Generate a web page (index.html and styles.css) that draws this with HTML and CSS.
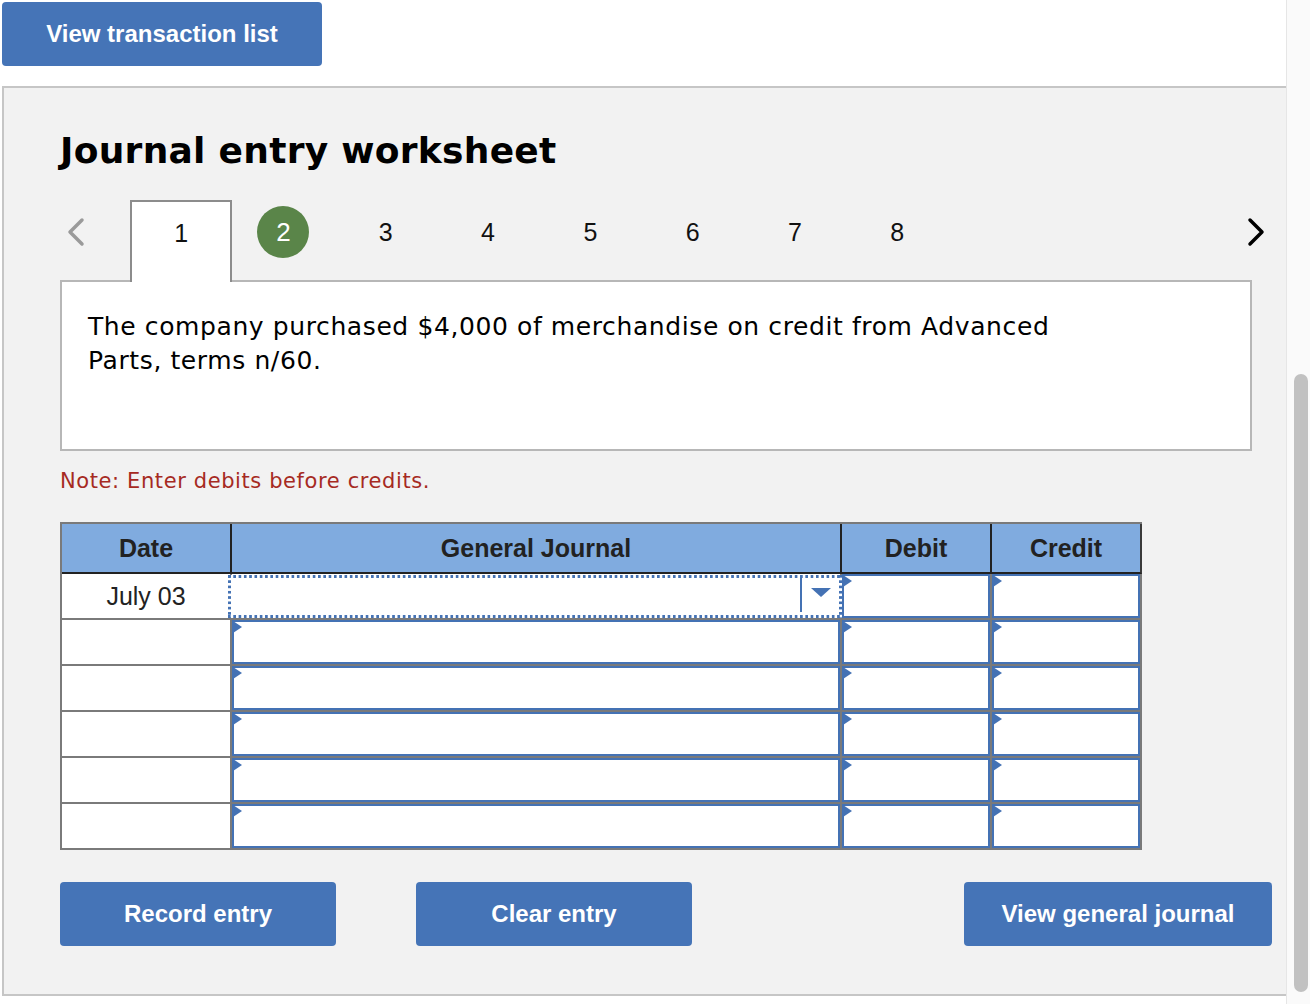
FILE: index.html
```html
<!DOCTYPE html>
<html lang="en">
<head>
<meta charset="utf-8">
<title>Journal entry worksheet</title>
<link rel="stylesheet" href="styles.css">
</head>
<body>
<div class="page">
  <div class="main">
    <div class="topbar">
      <button class="btn btn-top">View transaction list</button>
    </div>
    <section class="panel">
      <h1 class="title">Journal entry worksheet</h1>
      <div class="tabs">
        <div class="nav nav-prev">
          <svg width="20" height="30" viewBox="0 0 20 30"><polyline points="16,3 4,15 16,27" fill="none" stroke="#9a9a9a" stroke-width="3.5" stroke-linecap="round" stroke-linejoin="round"/></svg>
        </div>
        <div class="tab tab-active"><span class="tab-num">1</span></div>
        <div class="tab"><span class="tab-num tab-done">2</span></div>
        <div class="tab"><span class="tab-num">3</span></div>
        <div class="tab"><span class="tab-num">4</span></div>
        <div class="tab"><span class="tab-num">5</span></div>
        <div class="tab"><span class="tab-num">6</span></div>
        <div class="tab"><span class="tab-num">7</span></div>
        <div class="tab"><span class="tab-num">8</span></div>
        <div class="nav nav-next">
          <svg width="20" height="30" viewBox="0 0 20 30"><polyline points="4,3 16,15 4,27" fill="none" stroke="#000" stroke-width="3.5" stroke-linecap="round" stroke-linejoin="round"/></svg>
        </div>
      </div>
      <div class="desc">
        <p class="desc-text">The company purchased $4,000 of merchandise on credit from Advanced Parts, terms n/60.</p>
      </div>
      <p class="note">Note: Enter debits before credits.</p>
      <table class="journal">
        <thead>
          <tr>
            <th class="c-date">Date</th>
            <th class="c-gj">General Journal</th>
            <th class="c-amt">Debit</th>
            <th class="c-amt">Credit</th>
          </tr>
        </thead>
        <tbody>
          <tr>
            <td class="date-cell">July 03</td>
            <td><div class="select"><div class="select-arrow"><span class="caret"></span></div></div></td>
            <td><div class="field"></div></td>
            <td><div class="field"></div></td>
          </tr>
          <tr>
            <td class="date-cell"></td>
            <td><div class="field"></div></td>
            <td><div class="field"></div></td>
            <td><div class="field"></div></td>
          </tr>
          <tr>
            <td class="date-cell"></td>
            <td><div class="field"></div></td>
            <td><div class="field"></div></td>
            <td><div class="field"></div></td>
          </tr>
          <tr>
            <td class="date-cell"></td>
            <td><div class="field"></div></td>
            <td><div class="field"></div></td>
            <td><div class="field"></div></td>
          </tr>
          <tr>
            <td class="date-cell"></td>
            <td><div class="field"></div></td>
            <td><div class="field"></div></td>
            <td><div class="field"></div></td>
          </tr>
          <tr>
            <td class="date-cell"></td>
            <td><div class="field"></div></td>
            <td><div class="field"></div></td>
            <td><div class="field"></div></td>
          </tr>
        </tbody>
      </table>
      <div class="actions">
        <button class="btn btn-action">Record entry</button>
        <button class="btn btn-action btn-clear">Clear entry</button>
        <button class="btn btn-action btn-view">View general journal</button>
      </div>
    </section>
  </div>
  <div class="scrollbar"><div class="thumb"></div></div>
</div>
</body>
</html>
```
FILE: styles.css
```css
html, body {
  margin: 0;
  padding: 0;
  background: #fff;
}

body {
  font-family: "DejaVu Sans", Verdana, sans-serif;
  color: #000;
}

.page {
  display: flex;
  width: 1310px;
  height: 1004px;
  overflow: hidden;
}

.main {
  width: 1286px;
  flex: none;
}

.topbar {
  height: 86px;
  box-sizing: border-box;
  padding: 2px 0 0 2px;
}

.btn {
  background: #4574b7;
  color: #fff;
  border: 0;
  border-radius: 4px;
  font-family: "Liberation Sans", Arial, sans-serif;
  font-weight: bold;
  font-size: 24px;
  height: 64px;
  padding: 0;
  cursor: pointer;
}

.btn-top {
  width: 320px;
}

.panel {
  margin-left: 2px;
  border: 2px solid #c6c6c6;
  border-right: 0;
  background: #f2f2f2;
  padding: 41px 0 48px 56px;
}

.title {
  margin: 0;
  font-size: 36px;
  line-height: 44px;
  font-weight: bold;
  letter-spacing: 0.28px;
  color: #000;
}

.tabs {
  margin-top: 27px;
  width: 1212px;
  height: 82px;
  display: flex;
  align-items: flex-start;
  position: relative;
  z-index: 1;
}

.nav {
  height: 64px;
  display: flex;
  align-items: center;
}

.nav-prev {
  width: 70px;
  padding-left: 6px;
  box-sizing: border-box;
}

.nav-next {
  margin-left: auto;
  padding-right: 6px;
}

.tab {
  width: 102.3px;
  height: 64px;
  box-sizing: border-box;
  display: flex;
  align-items: center;
  justify-content: center;
  font-family: "Liberation Sans", Arial, sans-serif;
  font-size: 25px;
  color: #111;
}

.tab-active {
  height: 82px;
  padding-bottom: 18px;
  background: #fff;
  border: 2px solid #8c8c8c;
  border-bottom: 0;
}

.tab-done {
  width: 52px;
  height: 52px;
  border-radius: 50%;
  background: #5a8549;
  color: #fff;
  font-size: 26px;
  display: flex;
  align-items: center;
  justify-content: center;
}

.desc {
  margin-top: -2px;
  width: 1192px;
  height: 171px;
  box-sizing: border-box;
  background: #fff;
  border: 2px solid #b7b7b7;
  padding: 28px 26px 0 26px;
}

.desc-text {
  margin: 0;
  width: 1000px;
  font-size: 25px;
  line-height: 34px;
  letter-spacing: 0.6px;
  color: #000;
}

.note {
  margin: 18px 0 0 0;
  font-size: 21px;
  line-height: 25px;
  letter-spacing: 0.6px;
  color: #a62a22;
}

.journal {
  margin-top: 28px;
  border-collapse: separate;
  border-spacing: 0;
  border-top: 2px solid #7a7a7a;
  border-left: 2px solid #7a7a7a;
  font-family: "Liberation Sans", Arial, sans-serif;
}

.journal th,
.journal td {
  padding: 0;
  border-right: 2px solid #7a7a7a;
  border-bottom: 2px solid #7a7a7a;
}

.journal th {
  height: 48px;
  background: #80abdf;
  color: #222;
  font-size: 25px;
  font-weight: bold;
  text-align: center;
  border-right-color: #222;
  border-bottom-color: #222;
}

.journal th:last-child {
  border-right-color: #3a3a3a;
}

.c-date { width: 168px; }
.c-gj { width: 608px; }
.c-amt { width: 148px; }

.journal td {
  height: 44px;
  background: #fff;
  vertical-align: top;
}

.journal td.date-cell {
  font-size: 25px;
  color: #222;
  text-align: center;
  vertical-align: middle;
}

.field {
  position: relative;
  height: 44px;
  box-sizing: border-box;
  border: 2px solid #4472b4;
  background: #fff;
}

.field::before {
  content: "";
  position: absolute;
  left: -1px;
  top: -1px;
  width: 0;
  height: 0;
  border-left: 9px solid #4472b4;
  border-top: 6px solid transparent;
  border-bottom: 6px solid transparent;
}

.select {
  position: relative;
  z-index: 2;
  margin: 1px -2px 0 -4px;
  height: 43px;
  box-sizing: border-box;
  padding: 3px;
  display: flex;
  justify-content: flex-end;
  background:
    linear-gradient(to right, #4472b4 0 3px, transparent 3px 5.3px) left top / 5.3px 3px repeat-x,
    linear-gradient(to right, #4472b4 0 3px, transparent 3px 5.3px) left bottom / 5.3px 3px repeat-x,
    linear-gradient(to bottom, #4472b4 0 3px, transparent 3px 5.3px) left top / 3px 5.3px repeat-y,
    linear-gradient(to bottom, #4472b4 0 3px, transparent 3px 5.3px) right top / 3px 5.3px repeat-y,
    #fff;
}

.select-arrow {
  width: 39px;
  height: 34px;
  box-sizing: border-box;
  border-left: 2px solid #4472b4;
  display: flex;
  justify-content: center;
  align-items: flex-start;
}

.caret {
  margin-top: 10px;
  width: 0;
  height: 0;
  border-top: 9px solid #4472b4;
  border-left: 10px solid transparent;
  border-right: 10px solid transparent;
}

.actions {
  margin-top: 32px;
  width: 1212px;
  display: flex;
}

.btn-action {
  width: 276px;
}

.btn-clear {
  margin-left: 80px;
}

.btn-view {
  width: 308px;
  margin-left: auto;
}

.scrollbar {
  width: 24px;
  flex: none;
  box-sizing: border-box;
  border-left: 1px solid #e6e6e6;
  background: #fafafa;
  padding: 374px 2px 0 7px;
}

.thumb {
  width: 14px;
  height: 618px;
  border-radius: 7px;
  background: #c1c1c1;
}
```
